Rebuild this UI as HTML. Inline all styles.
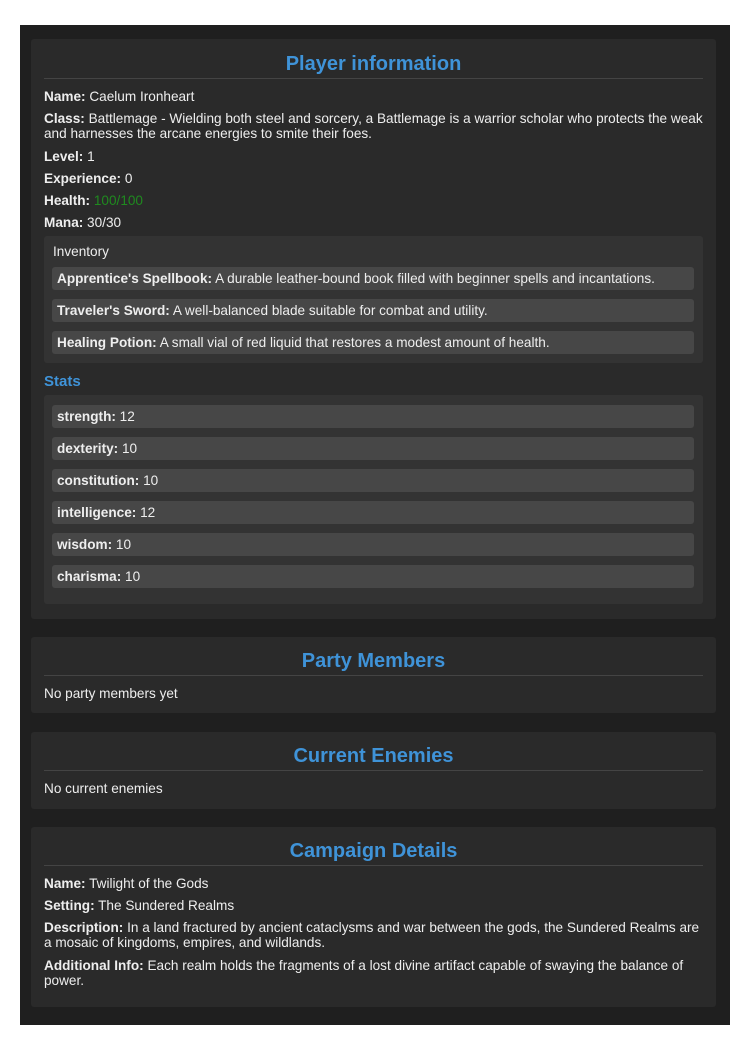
<!DOCTYPE html>
<html><head><meta charset="utf-8"><style>
*{box-sizing:border-box;margin:0;padding:0}
body{width:750px;height:1050px;background:#fff;font-family:"Liberation Sans",Arial,sans-serif;font-size:13.6px;color:#eee;position:relative}
.wrap{position:absolute;left:20px;top:25px;width:710px;height:1000px;background:#1f1f1f}
.panel{position:absolute;left:11px;width:685px;background:#2a2a2a;border-radius:3px}
h2{position:absolute;left:13px;width:659px;text-align:center;color:#3f93d8;font-size:20px;font-weight:bold;border-bottom:1px solid #444;height:30px;line-height:30px}
.t{position:absolute;left:13px;width:660px;line-height:15px}
b{font-weight:bold}
.box{position:absolute;left:13px;width:659px;background:#333;border-radius:3px}
.it{position:absolute;left:8px;width:642px;height:23px;background:#474747;border-radius:3px;line-height:23px;padding-left:5px}
h3{position:absolute;left:13px;color:#3f93d8;font-size:15px;font-weight:bold}
</style></head><body><div class="wrap">
<div class="panel" style="top:14px;height:580px">
<h2 style="top:10px">Player information</h2>
<div class="t" style="top:50px"><b>Name:</b> Caelum Ironheart</div>
<div class="t" style="top:72px"><b>Class:</b> Battlemage - Wielding both steel and sorcery, a Battlemage is a warrior scholar who protects the weak and harnesses the arcane energies to smite their foes.</div>
<div class="t" style="top:110px"><b>Level:</b> 1</div>
<div class="t" style="top:132px"><b>Experience:</b> 0</div>
<div class="t" style="top:154px"><b>Health:</b> <span style="color:#1f8a1f">100/100</span></div>
<div class="t" style="top:176px"><b>Mana:</b> 30/30</div>
<div class="box" style="top:197px;height:127px">
<div style="position:absolute;left:9px;top:8px">Inventory</div>
<div class="it" style="top:31px"><b>Apprentice's Spellbook:</b> A durable leather-bound book filled with beginner spells and incantations.</div>
<div class="it" style="top:63px"><b>Traveler's Sword:</b> A well-balanced blade suitable for combat and utility.</div>
<div class="it" style="top:95px"><b>Healing Potion:</b> A small vial of red liquid that restores a modest amount of health.</div>
</div>
<h3 style="top:334px">Stats</h3>
<div class="box" style="top:356px;height:209px">
<div class="it" style="top:10px"><b>strength:</b> 12</div>
<div class="it" style="top:42px"><b>dexterity:</b> 10</div>
<div class="it" style="top:74px"><b>constitution:</b> 10</div>
<div class="it" style="top:106px"><b>intelligence:</b> 12</div>
<div class="it" style="top:138px"><b>wisdom:</b> 10</div>
<div class="it" style="top:170px"><b>charisma:</b> 10</div>
</div>
</div>
<div class="panel" style="top:612px;height:76px">
<h2 style="top:9px">Party Members</h2>
<div class="t" style="top:49px">No party members yet</div>
</div>
<div class="panel" style="top:707px;height:77px">
<h2 style="top:9px">Current Enemies</h2>
<div class="t" style="top:49px">No current enemies</div>
</div>
<div class="panel" style="top:802px;height:180px">
<h2 style="top:9px">Campaign Details</h2>
<div class="t" style="top:49px"><b>Name:</b> Twilight of the Gods</div>
<div class="t" style="top:71px"><b>Setting:</b> The Sundered Realms</div>
<div class="t" style="top:93px"><b>Description:</b> In a land fractured by ancient cataclysms and war between the gods, the Sundered Realms are a mosaic of kingdoms, empires, and wildlands.</div>
<div class="t" style="top:131px"><b>Additional Info:</b> Each realm holds the fragments of a lost divine artifact capable of swaying the balance of<br>power.</div>
</div>
</div></body></html>
